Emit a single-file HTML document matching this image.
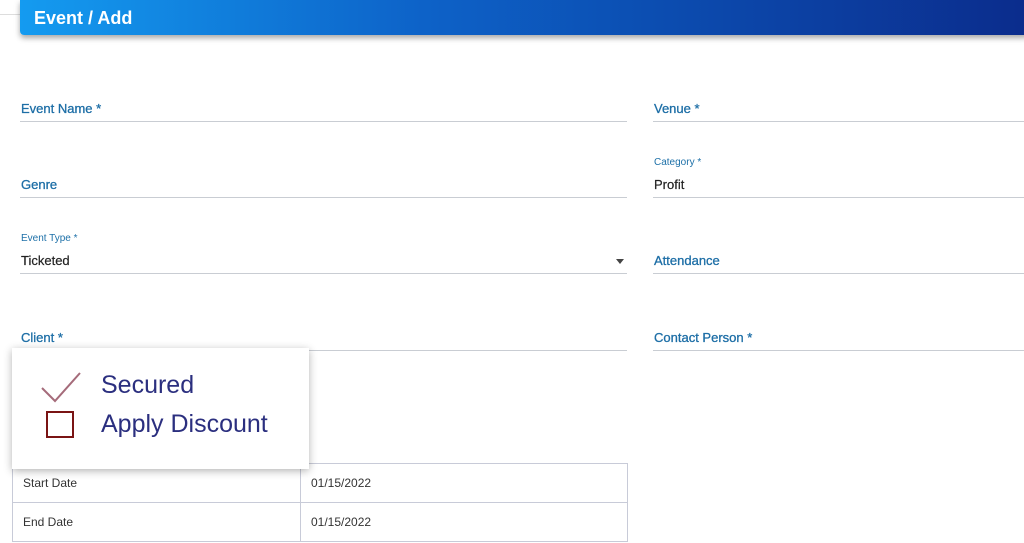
<!DOCTYPE html>
<html><head><style>
body{margin:0;width:1024px;height:543px;background:#fff;font-family:"Liberation Sans",sans-serif;position:relative;overflow:hidden}
.hdr{position:absolute;left:20px;top:0;width:1010px;height:35px;border-radius:0 0 6px 4px;background:linear-gradient(90deg,#149bf0 0%,#0d62c8 40%,#0b2c8c 100%);box-shadow:0 3px 6px rgba(0,0,0,.35)}
.hdr span{position:absolute;left:14px;top:8px;color:#fff;font-size:18px;font-weight:bold}
.f{position:absolute;border-bottom:1px solid #c9cdd3;height:30px}
.lbl{position:absolute;left:1px;bottom:5px;color:#1d6ea6;font-size:13px;-webkit-text-stroke:0.3px #1d6ea6}
.sm{position:absolute;left:1px;top:-10px;color:#1d70a8;font-size:10px}
.val{position:absolute;left:1px;bottom:5px;color:#222;font-size:13px;-webkit-text-stroke:0.2px #222}
.card{position:absolute;left:12px;top:348px;width:297px;height:121px;background:#fff;box-shadow:0 2px 8px rgba(0,0,0,.3)}
.card .t{position:absolute;left:89px;color:#2b2f7f;font-size:25px}
table{position:absolute;left:12px;top:463px;width:616px;border-collapse:collapse;font-size:12px;color:#333}
td{border:1px solid #c8cbd8;height:38px;padding:0 10px}
</style></head><body>
<div style="position:absolute;left:0;top:14px;width:22px;height:1px;background:#ddd"></div>
<div class="hdr"><span>Event / Add</span></div>
<div class="f" style="left:20px;top:91px;width:607px"><span class="lbl">Event Name *</span></div>
<div class="f" style="left:653px;top:91px;width:371px"><span class="lbl">Venue *</span></div>
<div class="f" style="left:20px;top:167px;width:607px"><span class="lbl">Genre</span></div>
<div class="f" style="left:653px;top:167px;width:371px"><span class="sm">Category *</span><span class="val">Profit</span></div>
<div class="f" style="left:20px;top:243px;width:607px"><span class="sm">Event Type *</span><span class="val">Ticketed</span>
<div style="position:absolute;right:3px;top:16px;border-left:4px solid transparent;border-right:4px solid transparent;border-top:5px solid #444"></div></div>
<div class="f" style="left:653px;top:243px;width:371px"><span class="lbl">Attendance</span></div>
<div class="f" style="left:20px;top:320px;width:607px"><span class="lbl">Client *</span></div>
<div class="f" style="left:653px;top:320px;width:371px"><span class="lbl">Contact Person *</span></div>
<table><tr><td style="width:267px">Start Date</td><td>01/15/2022</td></tr><tr><td>End Date</td><td>01/15/2022</td></tr></table>
<div class="card">
<svg style="position:absolute;left:28px;top:22px" width="44" height="34"><path d="M2 18 L15 31 L40 3" fill="none" stroke="#a56b7a" stroke-width="2"/></svg>
<div style="position:absolute;left:34px;top:63px;width:24px;height:23px;border:2px solid #7a1414"></div>
<span class="t" style="top:23px">Secured</span>
<span class="t" style="top:62px">Apply Discount</span>
</div>
</body></html>
